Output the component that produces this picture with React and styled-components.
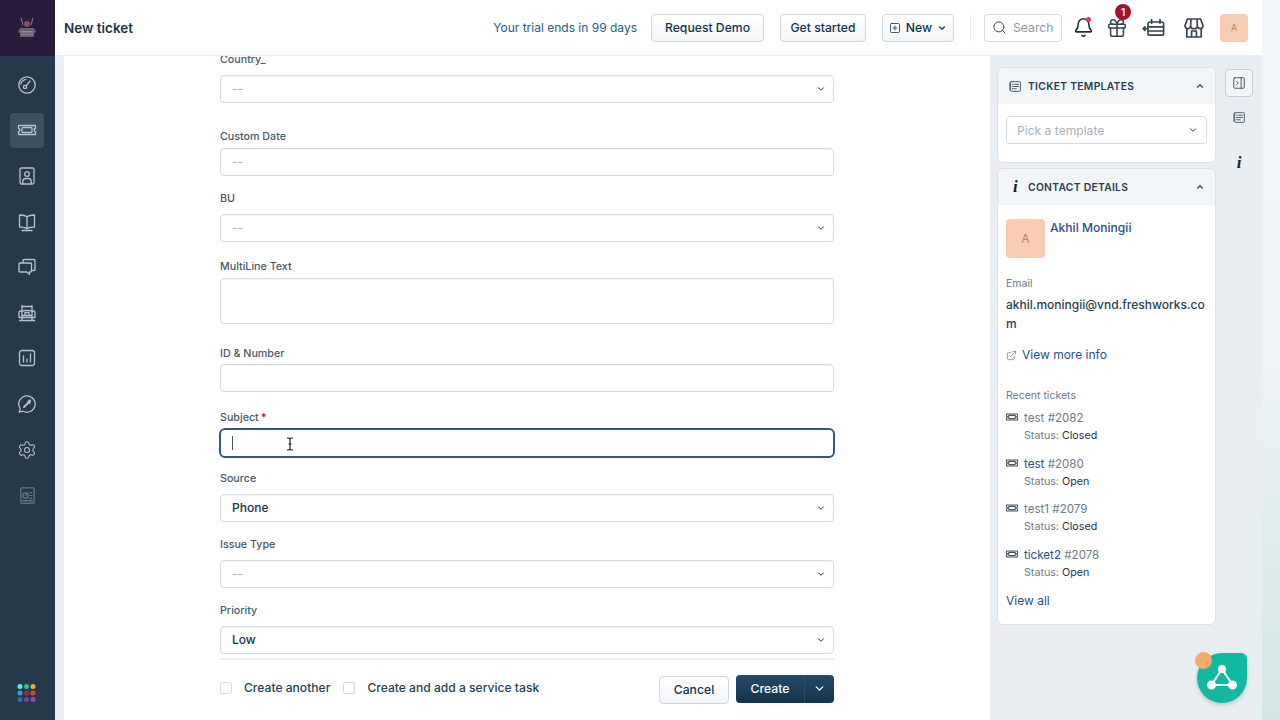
import React from "react";
import styled, { createGlobalStyle } from "styled-components";
import { Bell, ChevronDown, ChevronUp, ExternalLink, Gift, Search, Settings, SquarePlus } from "lucide-react";

const GlobalStyle = createGlobalStyle`
  * { box-sizing: border-box; }
  html, body { margin: 0; height: 100%; }
  body {
    width: 1280px;
    height: 720px;
    overflow: hidden;
    font-family: Inter, "Liberation Sans", sans-serif;
    color: #12344d;
    background: #e9eef2;
  }
`;

const Page = styled.div`
  display: flex;
  width: 1280px;
  height: 720px;
  position: relative;
`;

const Sidebar = styled.nav`
  width: 55px;
  flex: none;
  display: flex;
  flex-direction: column;
  background: #25394a;
`;

const Brand = styled.div`
  height: 56px;
  display: flex;
  align-items: center;
  justify-content: center;
  padding-right: 1px;
  background: #2a1a3c;
`;

const NavList = styled.div`
  flex: 1;
  padding: 6px 1px 0 0;
  display: flex;
  flex-direction: column;
  align-items: center;
`;

const NavSlot = styled.div`
  height: 45.6px;
  display: flex;
  align-items: center;
  justify-content: center;
`;

const NavItem = styled.div`
  width: 34px;
  height: 35px;
  border-radius: 4px;
  display: flex;
  align-items: center;
  justify-content: center;
  color: ${(p) => (p.$dim ? "#64788a" : "#b4c2cb")};
  background: ${(p) => (p.$active ? "#3d5060" : "transparent")};
`;

const Dots = styled.div`
  height: 37px;
  padding-right: 1px;
  display: flex;
  justify-content: center;
`;

const Main = styled.div`
  width: 1207px;
  flex: none;
  display: flex;
  flex-direction: column;
`;

const Strip = styled.div`
  flex: 1;
  background: linear-gradient(180deg, #f3f6f8 0%, #eef3f5 50%, #d3e6e6 100%);
`;

const Header = styled.header`
  height: 56px;
  flex: none;
  display: flex;
  align-items: center;
  padding: 0 14px 0 9px;
  background: #fff;
  border-bottom: 1px solid #ebeff3;
`;

const Title = styled.h1`
  flex: 1;
  margin: 0;
  font-size: 13.5px;
  font-weight: 600;
  color: #1d3547;
`;

const Trial = styled.span`
  font-size: 12px;
  color: #2a5a8f;
  margin-right: 14px;
`;

const HeaderButton = styled.button`
  height: 28px;
  width: ${(p) => p.$w}px;
  margin-right: ${(p) => p.$mr}px;
  display: flex;
  align-items: center;
  justify-content: center;
  gap: ${(p) => p.$gap || 0}px;
  padding: 0;
  font: 500 12.2px Inter, sans-serif;
  color: #12344d;
  background: linear-gradient(180deg, #fff, #f3f5f7);
  border: 1px solid #cfd7df;
  border-radius: 4px;
`;

const Divider = styled.div`
  width: 1px;
  height: 26px;
  background: #e3e8ec;
  margin-right: 13px;
`;

const SearchBox = styled.div`
  width: 78px;
  height: 28px;
  display: flex;
  align-items: center;
  gap: 6px;
  padding-left: 7px;
  margin-right: 10px;
  font-size: 12.2px;
  color: #8c9aa5;
  border: 1px solid #d5dce2;
  border-radius: 4px;
`;

const IconSlot = styled.div`
  position: relative;
  width: ${(p) => p.$w}px;
  height: 28px;
  display: flex;
  align-items: center;
  justify-content: center;
  color: #36454f;
`;

const BellDot = styled.span`
  position: absolute;
  top: 3px;
  right: 3px;
  width: 5px;
  height: 5px;
  border-radius: 50%;
  background: #d8405a;
`;

const GiftBadge = styled.span`
  position: absolute;
  top: -10px;
  right: 9px;
  width: 16px;
  height: 16px;
  border-radius: 50%;
  background: #a5122e;
  color: #fff;
  font-size: 10px;
  font-weight: 600;
  line-height: 16px;
  text-align: center;
`;

const Avatar = styled.div`
  width: ${(p) => p.$size}px;
  height: ${(p) => p.$size}px;
  flex: none;
  display: flex;
  align-items: center;
  justify-content: center;
  border-radius: 4px;
  background: #f8cdb3;
  color: #a98672;
  font-size: ${(p) => (p.$size > 30 ? 12 : 9)}px;
`;

const Body = styled.div`
  flex: 1;
  min-height: 0;
  display: flex;
  padding-left: 9px;
  background: #e9eff5;
`;

const FormPanel = styled.main`
  width: 926px;
  flex: none;
  display: flex;
  flex-direction: column;
  padding-left: 156px;
  background: #fff;
`;

const FormScroll = styled.div`
  height: 602px;
  width: 618px;
  margin-left: -2px;
  padding: 0 2px;
  flex: none;
  overflow: hidden;
`;

const FormInner = styled.div`
  margin-top: -5px;
`;

const Field = styled.div`
  margin-bottom: ${(p) => p.$mb}px;
`;

const Label = styled.label`
  display: block;
  height: 16px;
  line-height: 18px;
  margin-bottom: ${(p) => p.$gap}px;
  font-size: 10.7px;
  font-weight: 500;
  color: #475867;
`;

const Required = styled.span`
  color: #c82124;
  font-weight: 700;
  margin-left: 2px;
`;

const Control = styled.div`
  height: ${(p) => p.$h || 28}px;
  display: flex;
  align-items: center;
  justify-content: space-between;
  padding: 0 7px 1px 11px;
  font-size: 12px;
  font-weight: 500;
  color: ${(p) => (p.$empty ? "#a8b3bb" : "#12344d")};
  background: #fff;
  border: 1px solid #d5dce2;
  border-radius: 4px;
  box-shadow: inset 0 1px 1px #f1f3f5;
`;

const FocusedControl = styled.div`
  position: relative;
  height: 30px;
  margin: 0 -1px;
  display: flex;
  align-items: center;
  padding-left: 11px;
  background: #fff;
  border: 2px solid #34568f;
  border-radius: 6px;
`;

const Caret = styled.span`
  width: 1px;
  height: 14px;
  background: #555;
`;

const PointerCursor = styled.svg`
  position: absolute;
  left: 65px;
  top: 7px;
`;

const Footer = styled.footer`
  width: 614px;
  flex: 1;
  display: flex;
  align-items: center;
  padding: 1px 0 4px;
  border-top: 2px solid #ebeff3;
`;

const CheckRow = styled.label`
  display: flex;
  align-items: center;
  gap: 12px;
  margin: 0 ${(p) => p.$mr}px 2px 0;
  font-size: 12.1px;
  font-weight: 500;
  color: #283f50;
`;

const CheckBox = styled.span`
  width: 12px;
  height: 12px;
  background: #fff;
  border: 1px solid #d5dce2;
  border-radius: 2px;
`;

const Spacer = styled.div`
  flex: 1;
`;

const CancelButton = styled.button`
  width: 70px;
  height: 28px;
  margin: 2px 7px 0 0;
  padding: 0;
  font: 500 12.2px Inter, sans-serif;
  color: #12344d;
  background: linear-gradient(180deg, #fff, #f3f5f7);
  border: 1px solid #cfd7df;
  border-radius: 4px;
`;

const SplitButton = styled.div`
  width: 98px;
  height: 28px;
  display: flex;
  color: #fff;
  background: linear-gradient(180deg, #264966, #12344d);
  border-radius: 4px;
  font-size: 12.2px;
  font-weight: 500;
`;

const SplitMain = styled.div`
  width: 69px;
  display: flex;
  align-items: center;
  justify-content: center;
  border-right: 1px solid #2e4c63;
`;

const SplitArrow = styled.div`
  flex: 1;
  display: flex;
  align-items: center;
  justify-content: center;
`;

const SidePanel = styled.aside`
  flex: 1;
  display: flex;
  padding: 11px 0 0 7px;
  background: #e9eef2;
`;

const CardColumn = styled.div`
  width: 219px;
  display: flex;
  flex-direction: column;
  gap: 5px;
`;

const Card = styled.section`
  height: ${(p) => p.$h}px;
  overflow: hidden;
  background: #fff;
  border: 1px solid #dce3e8;
  border-radius: 6px;
`;

const CardHead = styled.div`
  height: ${(p) => p.$h}px;
  display: flex;
  align-items: center;
  padding: 0 10px;
  gap: 5px;
  background: #f3f6f8;
  font-size: 10.3px;
  font-weight: 600;
  letter-spacing: 0.3px;
  color: #283f50;
`;

const CardTitle = styled.span`
  flex: 1;
`;

const InfoGlyph = styled.span`
  font: italic 700 17px "Liberation Serif", serif;
  color: #0f1f2b;
  width: 15px;
  text-align: center;
`;

const TemplateBody = styled.div`
  padding: 12px 8px;
`;

const TemplateSelect = styled.div`
  height: 28px;
  display: flex;
  align-items: center;
  justify-content: space-between;
  padding: 0 8px 0 10px;
  font-size: 12.1px;
  color: #a8b3bb;
  border: 1px solid #d5dce2;
  border-radius: 4px;
`;

const ContactBody = styled.div`
  padding: 14px 8px;
`;

const Person = styled.div`
  display: flex;
  gap: 5px;
  margin-bottom: 19px;
`;

const PersonName = styled.a`
  font-size: 12.1px;
  font-weight: 500;
  line-height: 18px;
  color: #2c4e8e;
`;

const SmallLabel = styled.div`
  font-size: 10.5px;
  line-height: 14px;
  color: #6f7c87;
`;

const EmailValue = styled.div`
  width: 201px;
  margin: 4px 0 14px;
  font-size: 12px;
  font-weight: 500;
  line-height: 19px;
  word-break: break-all;
  color: #283f50;
`;

const MoreInfo = styled.a`
  display: flex;
  align-items: center;
  gap: 5px;
  font-size: 12px;
  line-height: 16px;
  color: #2c4e8e;
  margin-bottom: 26px;
  svg { color: #5d7da8; }
`;

const TicketListWrap = styled.div`
  margin-top: 7px;
`;

const TicketRow = styled.div`
  display: flex;
  gap: 6px;
  height: 45.7px;
`;

const TicketIcon = styled.svg`
  margin-top: 3px;
  flex: none;
  color: #46555f;
`;

const TicketName = styled.div`
  font-size: 11.6px;
  line-height: 16px;
  color: #6f7c87;
`;

const TicketLink = styled.span`
  color: ${(p) => (p.$link ? "#2c4e8e" : "#6f7c87")};
`;

const TicketStatus = styled.div`
  font-size: 10.7px;
  line-height: 20px;
  color: #6f7c87;
  b {
    font-weight: 400;
    color: #243645;
  }
`;

const ViewAll = styled.a`
  display: block;
  font-size: 12px;
  line-height: 16px;
  color: #2c4e8e;
`;

const Rail = styled.div`
  width: 46px;
  display: flex;
  flex-direction: column;
  align-items: center;
  padding-top: 2px;
`;

const RailButton = styled.div`
  width: 28px;
  height: 28px;
  margin-bottom: ${(p) => p.$mb}px;
  display: flex;
  align-items: center;
  justify-content: center;
  color: #3f4e59;
  ${(p) =>
    p.$boxed &&
    `background: #f3f6f8;
     border: 1px solid #c6cfd7;
     border-radius: 4px;`}
`;

const Launcher = styled.div`
  position: absolute;
  left: 1197px;
  top: 653px;
  width: 50px;
  height: 50px;
  display: flex;
  align-items: center;
  justify-content: center;
  background: #13b8a0;
  border-radius: 25px 6px 25px 25px;
  box-shadow: 0 2px 4px rgba(0, 0, 0, 0.18);
`;

const LauncherDot = styled.span`
  position: absolute;
  left: -2px;
  top: -1px;
  width: 17px;
  height: 17px;
  border-radius: 50%;
  background: #f2ad6d;
`;

const Ico = ({ children, size = 20, sw = 1.3 }) => (
  <svg width={size} height={size} viewBox="0 0 20 20" fill="none" stroke="currentColor" strokeWidth={sw} strokeLinecap="round" strokeLinejoin="round">
    {children}
  </svg>
);

const TicketGlyph = () => (
  <>
    <path d="M1.5 5.5h17v3a1.5 1.5 0 0 0 0 3v3h-17v-3a1.5 1.5 0 0 0 0-3z" />
    <rect x="5" y="7.5" width="10" height="5" rx="1.2" />
  </>
);

const TemplateGlyph = () => (
  <>
    <path d="M4 3.5h11.5a1 1 0 0 1 1 1v11a1 1 0 0 1-1 1H4.5a1 1 0 0 1-1-1V4z" />
    <path d="M2.5 5v10M6 7h1M9 7h5M6 10h8M6 13h5" />
  </>
);

const navIcons = [
  <Ico key="dash">
    <circle cx="10" cy="10" r="8.2" />
    <circle cx="8" cy="12" r="1.6" />
    <path d="M9.2 10.8 13 6M3.8 9a6.5 6.5 0 0 1 5-4.6" />
  </Ico>,
  <Ico key="ticket"><TicketGlyph /></Ico>,
  <Ico key="contact">
    <rect x="3" y="2" width="14" height="16" rx="1.5" />
    <circle cx="10" cy="8" r="2.3" />
    <path d="M5.8 18v-2.5a3 3 0 0 1 3-3h2.4a3 3 0 0 1 3 3V18" />
  </Ico>,
  <Ico key="book">
    <path d="M10 5c-1.5-1.4-4-2-7.5-2v12c3.5 0 6 .6 7.5 1.6 1.5-1 4-1.6 7.5-1.6V3C14 3 11.5 3.6 10 5zM10 5v11.6M5 18.500h10" />
  </Ico>,
  <Ico key="chat">
    <path d="M6 5.5V3.5a1 1 0 0 1 1-1h10a1 1 0 0 1 1 1v9a1 1 0 0 1-1 1h-2" />
    <path d="M3 6h10.5a1 1 0 0 1 1 1v7a1 1 0 0 1-1 1h-1v2.5L10 15H3a1 1 0 0 1-1-1V7a1 1 0 0 1 1-1z" />
  </Ico>,
  <Ico key="assets">
    <path d="M5 2.5v15M15 2.5v15M5 3.5h10M2.5 17.5h15M5 8.5c2-1.5 8-1.5 10 0M2 9.5a1.5 1.5 0 0 1 3 0v3h10v-3a1.5 1.5 0 0 1 3 0v5H2zM8 12.5V9.5h4v3" />
  </Ico>,
  <Ico key="reports">
    <rect x="2.5" y="2.5" width="15" height="15" rx="2.5" />
    <path d="M6.5 8v6M10 11v3M13.5 6v8" />
  </Ico>,
  <Ico key="solutions">
    <path d="M10 1.8a8.2 8.2 0 1 1-4 15.4l-3.800 1 1-3.600A8.200 8.200 0 0 1 10 1.800z" />
    <path d="M7 13l4-4" strokeWidth="2" />
    <path d="M11 7.5l2-1.500.5 1-1 2.500-1.500-.5z" fill="currentColor" />
  </Ico>,
  <Settings key="settings" size={20} strokeWidth={1.3} />,
  <Ico key="dim" size={19}>
    <rect x="3" y="2" width="14" height="16" rx="1" />
    <circle cx="8" cy="10" r="2.8" />
    <path d="M8 10l1.500-2.500M12.500 7h2M12.500 10h2M12.500 13h2M5 15.500h10" />
  </Ico>,
];

const Logo = () => (
  <svg width="18" height="22" viewBox="0 0 18 22" fill="none">
    <path d="M3 1l2 7M15 1l-2 7" stroke="#7b7080" strokeWidth="1.2" />
    <circle cx="9" cy="7" r="3" fill="#7d5660" />
    <path d="M2 11h14l2 4-2 1v4H2v-4l-2-1z" fill="#6a6070" />
    <path d="M3 14h12v1.500H3zM3 17h12v1H3z" fill="#8f8794" />
  </svg>
);

const DotGrid = () => (
  <svg width="20" height="20" viewBox="0 0 20 20">
    {[
      ["#5de6e0", "#34c07a", "#e8b22e"],
      ["#3c9ad6", "#a5213f", "#d8482f"],
      ["#2f6f9f", "#7b3fa5", "#9a45b0"],
    ].map((row, y) => row.map((c, x) => <circle key={c} cx={3 + x * 6.5} cy={3.5 + y * 6.5} r="2.5" fill={c} />))}
  </svg>
);

const Select = ({ value }) => (
  <Control $empty={value === "--"}>
    {value}
    <ChevronDown size={10} strokeWidth={2.4} color="#12344d" />
  </Control>
);

const tickets = [
  { name: "test", id: "#2082", status: "Closed" },
  { name: "test", id: "#2080", status: "Open", link: true },
  { name: "test1", id: "#2079", status: "Closed" },
  { name: "ticket2", id: "#2078", status: "Open", link: true },
];

function TicketList() {
  return (
    <TicketListWrap>
      {tickets.map((t) => (
        <TicketRow key={t.id}>
          <TicketIcon width="12" height="8" viewBox="1 4 18 12" fill="none" stroke="currentColor" strokeWidth="1.8"><TicketGlyph /></TicketIcon>
          <div>
            <TicketName><TicketLink $link={t.link}>{t.name}</TicketLink> {t.id}</TicketName>
            <TicketStatus>Status: <b>{t.status}</b></TicketStatus>
          </div>
        </TicketRow>
      ))}
    </TicketListWrap>
  );
}

export default function App() {
  return (
    <Page>
      <GlobalStyle />
      <Sidebar>
        <Brand><Logo /></Brand>
        <NavList>
          {navIcons.map((icon, i) => (
            <NavSlot key={i}>
              <NavItem $active={i === 1} $dim={i === 9}>{icon}</NavItem>
            </NavSlot>
          ))}
        </NavList>
        <Dots><DotGrid /></Dots>
      </Sidebar>

      <Main>
        <Header>
          <Title>New ticket</Title>
          <Trial>Your trial ends in 99 days</Trial>
          <HeaderButton $w={113} $mr={16}>Request Demo</HeaderButton>
          <HeaderButton $w={86} $mr={16}>Get started</HeaderButton>
          <HeaderButton $w={72} $mr={16} $gap={5}>
            <SquarePlus size={12} strokeWidth={1.6} /> New <ChevronDown size={10} strokeWidth={2.6} />
          </HeaderButton>
          <Divider />
          <SearchBox>
            <Search size={15} strokeWidth={1.6} color="#3f4e59" /> Search
          </SearchBox>
          <IconSlot $w={22}>
            <Bell size={21} strokeWidth={1.8} color="#1d2f3d" />
            <BellDot />
          </IconSlot>
          <IconSlot $w={46}>
            <Gift size={22} strokeWidth={1.7} />
            <GiftBadge>1</GiftBadge>
          </IconSlot>
          <IconSlot $w={28}>
            <Ico size={24} sw={1.4}>
              <rect x="5" y="5" width="13" height="11" rx="1.5" />
              <path d="M8 3v3M15 3v3M5 9h13M5 12.5h13M1 10.5h3M2.5 9l-1.5 1.5L2.5 12" />
            </Ico>
          </IconSlot>
          <IconSlot $w={52}>
            <Ico size={24} sw={1.4}>
              <path d="M4.5 2.5h11l2 5.500a2.300 2.300 0 0 1-4.700.3 2.800 2.300 0 0 1-5.600 0 2.300 2.300 0 0 1-4.700-.3zM7.500 2.500 7.200 8M12.500 2.500 12.800 8" />
              <path d="M4 11v6.500h12V11M8 17.500v-5h4v5" />
            </Ico>
          </IconSlot>
          <Avatar $size={28}>A</Avatar>
        </Header>

        <Body>
          <FormPanel>
            <FormScroll>
              <FormInner>
                <Field $mb={25}>
                  <Label $gap={8}>Country_</Label>
                  <Select value="--" />
                </Field>
                <Field $mb={14}>
                  <Label $gap={4}>Custom Date</Label>
                  <Control $empty>--</Control>
                </Field>
                <Field $mb={16}>
                  <Label $gap={8}>BU</Label>
                  <Select value="--" />
                </Field>
                <Field $mb={21}>
                  <Label $gap={4}>MultiLine Text</Label>
                  <Control $h={46} />
                </Field>
                <Field $mb={17}>
                  <Label $gap={3}>ID &amp; Number</Label>
                  <Control />
                </Field>
                <Field $mb={12}>
                  <Label $gap={3}>Subject<Required>*</Required></Label>
                  <FocusedControl>
                    <Caret />
                    <PointerCursor width="8" height="14" viewBox="0 0 8 14" fill="none" stroke="#222" strokeWidth="1.2">
                      <path d="M1 1h2l1 1 1-1h2M4 2v10M1 13h2l1-1 1 1h2M2.5 7h3" />
                    </PointerCursor>
                  </FocusedControl>
                </Field>
                <Field $mb={14}>
                  <Label $gap={8}>Source</Label>
                  <Select value="Phone" />
                </Field>
                <Field $mb={14}>
                  <Label $gap={8}>Issue Type</Label>
                  <Select value="--" />
                </Field>
                <Field $mb={4}>
                  <Label $gap={8}>Priority</Label>
                  <Select value="Low" />
                </Field>
              </FormInner>
            </FormScroll>
            <Footer>
              <CheckRow $mr={13}><CheckBox /> Create another</CheckRow>
              <CheckRow $mr={0}><CheckBox /> Create and add a service task</CheckRow>
              <Spacer />
              <CancelButton>Cancel</CancelButton>
              <SplitButton>
                <SplitMain>Create</SplitMain>
                <SplitArrow><ChevronDown size={13} strokeWidth={2.6} /></SplitArrow>
              </SplitButton>
            </Footer>
          </FormPanel>

          <SidePanel>
            <CardColumn>
              <Card $h={96}>
                <CardHead $h={36}>
                  <Ico size={15} sw={1.1}><TemplateGlyph /></Ico>
                  <CardTitle>TICKET TEMPLATES</CardTitle>
                  <ChevronUp size={10} strokeWidth={2.6} />
                </CardHead>
                <TemplateBody>
                  <TemplateSelect>
                    Pick a template
                    <ChevronDown size={10} strokeWidth={2.2} color="#12344d" />
                  </TemplateSelect>
                </TemplateBody>
              </Card>
              <Card $h={457}>
                <CardHead $h={36}>
                  <InfoGlyph>i</InfoGlyph>
                  <CardTitle>CONTACT DETAILS</CardTitle>
                  <ChevronUp size={10} strokeWidth={2.6} />
                </CardHead>
                <ContactBody>
                  <Person>
                    <Avatar $size={39}>A</Avatar>
                    <PersonName>Akhil Moningii</PersonName>
                  </Person>
                  <SmallLabel>Email</SmallLabel>
                  <EmailValue>akhil.moningii@vnd.freshworks.com</EmailValue>
                  <MoreInfo>
                    <ExternalLink size={11} strokeWidth={1.6} /> View more info
                  </MoreInfo>
                  <SmallLabel>Recent tickets</SmallLabel>
                  <TicketList />
                  <ViewAll>View all</ViewAll>
                </ContactBody>
              </Card>
            </CardColumn>
            <Rail>
              <RailButton $boxed $mb={6}>
                <Ico size={14} sw={1.3}>
                  <rect x="2.5" y="2.5" width="15" height="15" rx="1.5" />
                  <path d="M13 2.5v15M6.5 7.500 9 10l-2.500 2.500" />
                </Ico>
              </RailButton>
              <RailButton $mb={18}>
                <Ico size={15} sw={1.1}><TemplateGlyph /></Ico>
              </RailButton>
              <RailButton $mb={0}><InfoGlyph>i</InfoGlyph></RailButton>
            </Rail>
          </SidePanel>
        </Body>
      </Main>

      <Strip />

      <Launcher>
        <LauncherDot />
        <svg width="30" height="28" viewBox="0 0 30 28" fill="none" stroke="#fff" strokeWidth="2">
          <path d="M15 5 4.5 21h21z" />
          <circle cx="15" cy="5" r="3" fill="#fff" />
          <circle cx="4.5" cy="21" r="3.5" fill="#fff" />
          <circle cx="25.5" cy="21" r="3.5" fill="#fff" />
        </svg>
      </Launcher>
    </Page>
  );
}
